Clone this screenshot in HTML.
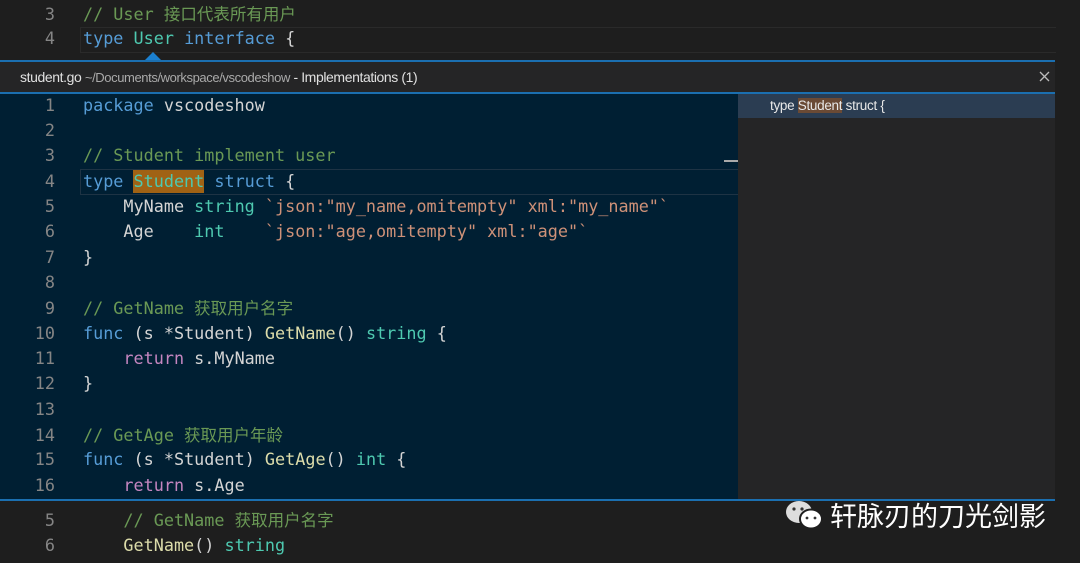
<!DOCTYPE html><html><head><meta charset="utf-8"><style>
body{margin:0;width:1080px;height:563px;background:#1e1e1e;overflow:hidden;position:relative;font-family:"DejaVu Sans Mono","Liberation Mono","Noto Sans CJK SC",monospace;font-size:16.8px;}
.l{position:absolute;left:0;height:25.33px;line-height:25.33px;white-space:pre;color:#d4d4d4;}
.n{display:inline-block;width:55px;text-align:right;color:#858585;margin-right:28px;}
.k{color:#569cd6}.t{color:#4ec9b0}.c{color:#6a9955}.s{color:#ce9178}.f{color:#dcdcaa}.r{color:#c586c0}.v{color:#d4d4d4}
.cjk{font-family:"Noto Sans CJK SC",sans-serif;font-size:16.5px}
</style></head><body>
<div class="l" style="top:1px"><span class="n">3</span><span class="c">// User <span class="cjk">接口代表所有用户</span></span></div>
<div class="l" style="top:26px"><span class="n">4</span><span class="k">type</span> <span class="t">User</span> <span class="k">interface</span> {</div>
<div style="position:absolute;left:80px;top:27px;width:975px;height:24px;border:1px solid #2a2a2a;border-right:none"></div>
<div style="position:absolute;left:145px;top:52px;width:0;height:0;border-left:8px solid transparent;border-right:8px solid transparent;border-bottom:8px solid #1b80d0"></div>
<div style="position:absolute;left:0;top:60px;width:1055px;height:2px;background:#1b6fb0"></div>
<div style="position:absolute;left:0;top:62px;width:1055px;height:31px;background:#252526;font-family:'Liberation Sans',sans-serif;font-size:14px;line-height:31px;color:#e0e0e0;letter-spacing:-0.4px">
<span style="position:absolute;left:20px">student.go <span style="color:#aaa;font-size:13px">~/Documents/workspace/vscodeshow</span> - Implementations (1)</span>
<svg style="position:absolute;left:1039px;top:9px" width="11" height="11"><path d="M1 1L10 10M10 1L1 10" stroke="#bbb" stroke-width="1.3"/></svg></div>
<div style="position:absolute;left:0;top:92px;width:1055px;height:2px;background:#1b6fb0"></div>
<div style="position:absolute;left:0;top:94px;width:738px;height:406px;background:#001f33"></div>
<div style="position:absolute;left:738px;top:94px;width:317px;height:406px;background:#252526"></div>
<div style="position:absolute;left:738px;top:94px;width:317px;height:24px;background:#2b3d52;font-family:'Liberation Sans',sans-serif;font-size:13.5px;line-height:24px;color:#e8e8e8;letter-spacing:-0.3px"><span style="position:absolute;left:32px">type <span style="background:#6a4a35">Student</span> struct {</span></div>
<div style="position:absolute;left:724px;top:160px;width:14px;height:2px;background:#aaa"></div>
<div style="position:absolute;left:0;top:499px;width:1055px;height:2px;background:#1b6fb0"></div>
<div style="position:absolute;left:80px;top:169px;width:657px;height:24px;border:1px solid #1e3344;border-right:none"></div>
<div style="position:absolute;left:133px;top:170px;width:71px;height:23px;background:#a06214"></div>
<div class="l" style="top:93px"><span class="n">1</span><span class="k">package</span> vscodeshow</div>
<div class="l" style="top:118px"><span class="n">2</span></div>
<div class="l" style="top:143px"><span class="n">3</span><span class="c">// Student implement user</span></div>
<div class="l" style="top:169px"><span class="n">4</span><span class="k">type</span> <span class="t">Student</span> <span class="k">struct</span> {</div>
<div class="l" style="top:194px"><span class="n">5</span>    <span class="v">MyName</span> <span class="t">string</span> <span class="s">`json:"my_name,omitempty" xml:"my_name"`</span></div>
<div class="l" style="top:219px"><span class="n">6</span>    <span class="v">Age</span>    <span class="t">int</span>    <span class="s">`json:"age,omitempty" xml:"age"`</span></div>
<div class="l" style="top:245px"><span class="n">7</span>}</div>
<div class="l" style="top:270px"><span class="n">8</span></div>
<div class="l" style="top:295px"><span class="n">9</span><span class="c">// GetName <span class="cjk">获取用户名字</span></span></div>
<div class="l" style="top:321px"><span class="n">10</span><span class="k">func</span> (<span class="v">s</span> *<span class="v">Student</span>) <span class="f">GetName</span>() <span class="t">string</span> {</div>
<div class="l" style="top:346px"><span class="n">11</span>    <span class="r">return</span> <span class="v">s</span>.<span class="v">MyName</span></div>
<div class="l" style="top:371px"><span class="n">12</span>}</div>
<div class="l" style="top:397px"><span class="n">13</span></div>
<div class="l" style="top:422px"><span class="n">14</span><span class="c">// GetAge <span class="cjk">获取用户年龄</span></span></div>
<div class="l" style="top:447px"><span class="n">15</span><span class="k">func</span> (<span class="v">s</span> *<span class="v">Student</span>) <span class="f">GetAge</span>() <span class="t">int</span> {</div>
<div class="l" style="top:473px"><span class="n">16</span>    <span class="r">return</span> <span class="v">s</span>.<span class="v">Age</span></div>
<div class="l" style="top:507px"><span class="n">5</span>    <span class="c">// GetName <span class="cjk">获取用户名字</span></span></div>
<div class="l" style="top:533px"><span class="n">6</span>    <span class="f">GetName</span>() <span class="t">string</span></div>
<div style="position:absolute;left:784px;top:497px;width:44px;height:36px">
<svg width="44" height="36" viewBox="0 0 44 36"><ellipse cx="15" cy="15" rx="13" ry="11" fill="#ddd"/><ellipse cx="27" cy="22" rx="11" ry="9.5" fill="#fff" stroke="#1e1e1e" stroke-width="2"/><circle cx="10" cy="12" r="1.6" fill="#333"/><circle cx="18" cy="12" r="1.6" fill="#333"/><circle cx="23" cy="21" r="1.4" fill="#333"/><circle cx="31" cy="21" r="1.4" fill="#333"/></svg></div>
<div style="position:absolute;left:830px;top:497px;font-family:'Noto Sans CJK SC',sans-serif;font-size:27px;color:#fff;line-height:36px">轩脉刃的刀光剑影</div>
</body></html>
